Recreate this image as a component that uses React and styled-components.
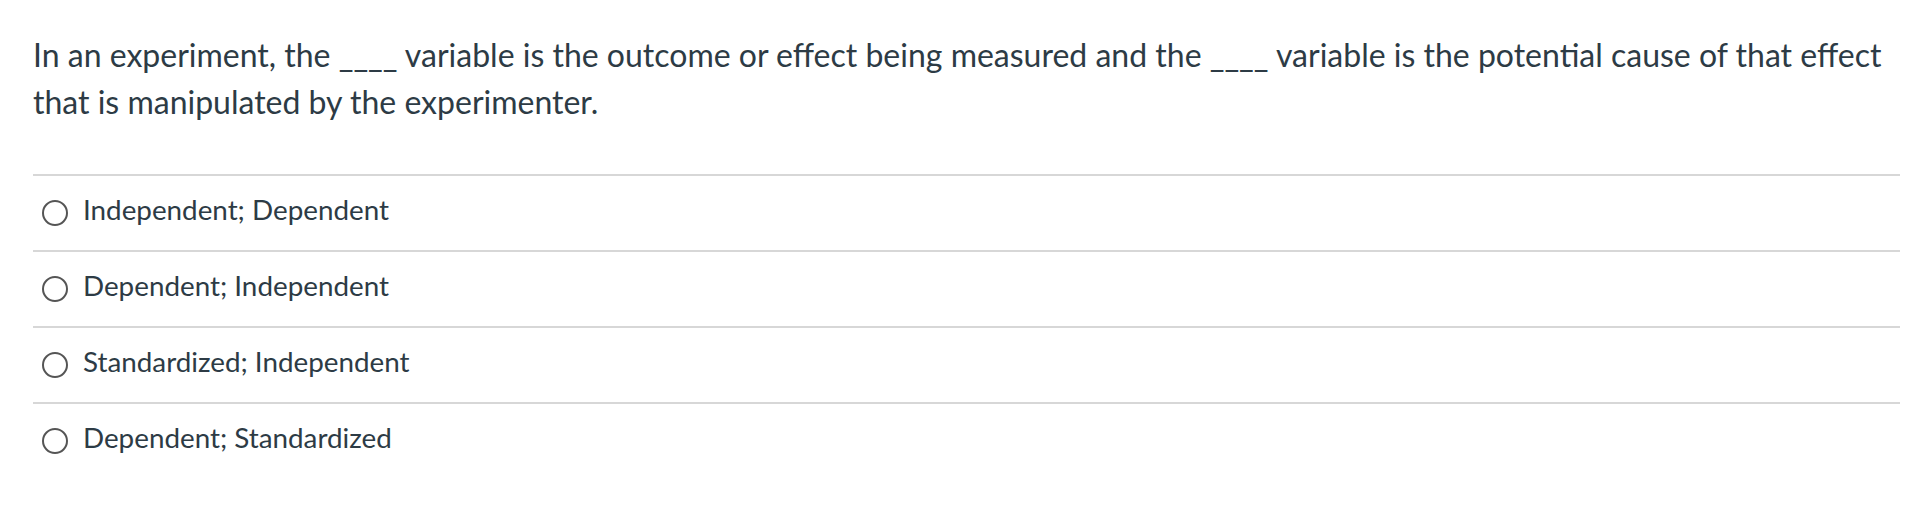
import React from "react";
import styled, { createGlobalStyle } from "styled-components";

const Global = createGlobalStyle`
  html, body { margin: 0; padding: 0; background: #fff; }
  body { font-family: Lato, "Open Sans", sans-serif; color: #2d3b45; }
`;

const Page = styled.div`
  padding: 31px 16px 0 33px;
`;

const Question = styled.p`
  margin: 0 0 49px 0;
  font-size: 32px;
  line-height: 47px;
  color: #2d3b45;
`;

const Answers = styled.div`
  display: flex;
  flex-direction: column;
`;

const Row = styled.label`
  display: flex;
  align-items: center;
  height: 76px;
  box-sizing: border-box;
  border-top: 2px solid #d7d7d7;
  padding-left: 9px;
  gap: 15px;
`;

const Radio = styled.span`
  width: 26px;
  height: 26px;
  box-sizing: border-box;
  border: 2px solid #555;
  border-radius: 50%;
  flex: none;
`;

const AnswerText = styled.span`
  font-size: 27.8px;
  line-height: 34px;
  margin-bottom: 6px;
  color: #2d3b45;
`;

const answers = [
  "Independent; Dependent",
  "Dependent; Independent",
  "Standardized; Independent",
  "Dependent; Standardized",
];

export default function App() {
  return (
    <>
      <Global />
      <Page>
        <Question>
          In an experiment, the ____ variable is the outcome or effect being
          measured and the ____ variable is the potential cause of that effect
          that is manipulated by the experimenter.
        </Question>
        <Answers>
          {answers.map((a) => (
            <Row key={a}>
              <Radio />
              <AnswerText>{a}</AnswerText>
            </Row>
          ))}
        </Answers>
      </Page>
    </>
  );
}
